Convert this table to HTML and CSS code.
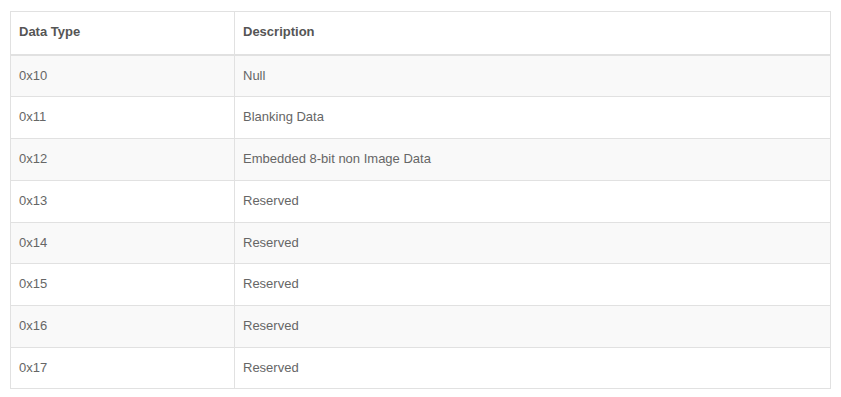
FILE: index.html
```html
<!DOCTYPE html>
<html>
<head>
<meta charset="utf-8">
<link rel="stylesheet" href="styles.css">
</head>
<body>
<div class="wrap">
<table class="data-table">
  <thead>
    <tr><th class="col-type">Data Type</th><th>Description</th></tr>
  </thead>
  <tbody>
    <tr><td>0x10</td><td>Null</td></tr>
    <tr><td>0x11</td><td>Blanking Data</td></tr>
    <tr><td>0x12</td><td>Embedded 8-bit non Image Data</td></tr>
    <tr><td>0x13</td><td>Reserved</td></tr>
    <tr><td>0x14</td><td>Reserved</td></tr>
    <tr><td>0x15</td><td>Reserved</td></tr>
    <tr><td>0x16</td><td>Reserved</td></tr>
    <tr><td>0x17</td><td>Reserved</td></tr>
  </tbody>
</table>
</div>
</body>
</html>
```

FILE: styles.css
```css
html, body {
  margin: 0;
  padding: 0;
  background: #fff;
}
.wrap {
  padding: 11px 10px;
}
.data-table {
  width: 100%;
  border-collapse: collapse;
  border-spacing: 0;
  border: 1px solid #e1e1e1;
  font-family: "Liberation Sans", Arial, sans-serif;
  font-size: 13px;
  line-height: 18.7px;
  color: #666;
}
.data-table th,
.data-table td {
  text-align: left;
  padding: 11px 8px;
  border: 1px solid #e1e1e1;
  vertical-align: top;
}
.data-table th {
  font-weight: bold;
  color: #555;
  padding-bottom: 12px;
  border-bottom: 2px solid #e1e1e1;
}
.col-type {
  width: 207px;
}
.data-table tbody tr:nth-child(odd) {
  background: #f9f9f9;
}
```
